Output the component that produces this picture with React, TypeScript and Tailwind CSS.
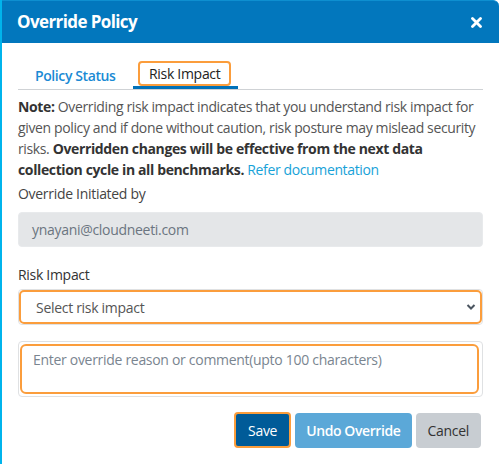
import React from 'react';

export default function App() {
  return (
    <div
      className="w-[499px] h-[464px] overflow-hidden bg-white border-l-2 border-[#00b4ec] text-[14px]"
      style={{ fontFamily: '"Open Sans", "Noto Sans", sans-serif' }}
    >
      {/* Header */}
      <div className="h-[43px] bg-[#0277bd] rounded-tr-[6px] flex items-center justify-between pl-[15px] pr-[16px] border-t border-[#0e8fd0]">
        <h1 className="text-white font-bold text-[17px] tracking-[-0.6px]">Override Policy</h1>
        <svg width="11" height="11" viewBox="0 0 11 11" className="mr-[1px]">
          <path d="M1.5 1.5 L9.5 9.5 M9.5 1.5 L1.5 9.5" stroke="white" strokeWidth="2.8" strokeLinecap="round" />
        </svg>
      </div>

      <div className="px-[16px]">
        {/* Tabs */}
        <div className="mt-[18px] flex border-b border-[#cfd2d5] h-[29px]">
          <div className="w-[115px] pl-[17px] pt-[4px] text-[#1a8ad4] font-semibold tracking-[-0.4px]">Policy Status</div>
          <div className="w-[105px] border-b-[3px] border-[#0071b9] pl-[5px]">
            <span className="inline-block h-[25px] leading-[21px] px-[9px] border-2 border-[#fb9d3c] rounded-[4px] text-[#222] tracking-[-0.3px]">
              Risk Impact
            </span>
          </div>
        </div>

        {/* Note */}
        <p className="mt-[6px] leading-[21px] text-[#555] tracking-[-0.37px]">
          <b className="text-[#333]">Note:</b> Overriding risk impact indicates that you understand risk impact for given
          policy and if done without caution, risk posture may mislead security risks.{' '}
          <b className="text-[#333]">Overridden changes will be effective from the next data collection cycle in all benchmarks.</b>{' '}
          <span className="text-[#17a2d8]">Refer documentation</span>
        </p>

        <div className="mt-[3px] text-[#444] tracking-[-0.3px]">Override Initiated by</div>
        <div className="mt-[8px] h-[35px] rounded-[4px] bg-[#e4e6e8] flex items-center pl-[13px] text-[#6b7580] tracking-[-0.3px] border border-[#e8eaec]">
          ynayani@cloudneeti.com
        </div>

        <div className="mt-[17px] text-[#333] tracking-[-0.3px]">Risk Impact</div>
        <div className="mt-[4px] h-[36px] border border-[#dfe1e3] rounded-[4px] p-0">
          <div className="h-[34px] border-2 border-[#fb9d3c] rounded-[5px] flex items-center justify-between pl-[15px] pr-[4px] text-[#555] tracking-[-0.3px]">
            Select risk impact
            <svg width="10" height="8" viewBox="0 0 10 8">
              <path d="M1.5 2 L5 5.5 L8.5 2" fill="none" stroke="#4b5560" strokeWidth="2" />
            </svg>
          </div>
        </div>

        <div className="mt-[16px] h-[56px] border border-[#dfe1e3] rounded-[4px] pl-[1px] pr-[3px] py-[2px]">
          <div className="h-[50px] border-2 border-[#fb9d3c] rounded-[6px] pl-[11px] pt-[3px] text-[#7a8590] tracking-[-0.3px]">
            Enter override reason or comment(upto 100 characters)
          </div>
        </div>

        {/* Buttons */}
        <div className="mt-[15px] flex justify-end gap-[4px]">
          <button className="h-[36px] px-[12px] rounded-[4px] bg-[#005b98] border-2 border-[#fb9d3c] text-white tracking-[-0.3px]">
            Save
          </button>
          <button className="h-[35px] px-[11px] rounded-[4px] bg-[#5ba8d8] text-white font-semibold tracking-[-0.4px] mt-[1px]">
            Undo Override
          </button>
          <button className="h-[35px] px-[12px] rounded-[4px] bg-[#c8cdd2] text-[#333] tracking-[-0.3px] mt-[1px] mr-[2px]">
            Cancel
          </button>
        </div>
      </div>
    </div>
  );
}
